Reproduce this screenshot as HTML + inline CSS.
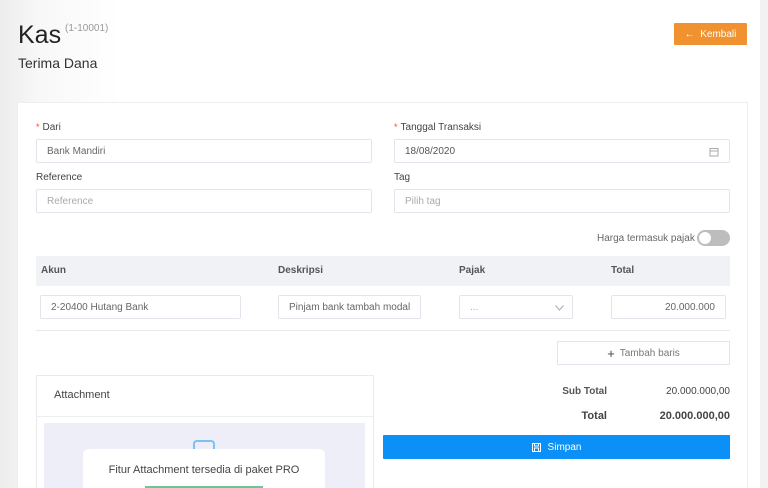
<!DOCTYPE html>
<html style="width:768px;height:488px;overflow:hidden"><head><style>
*{box-sizing:border-box;margin:0;padding:0}
body{width:768px;height:488px;overflow:hidden;font-family:"Liberation Sans",sans-serif;background:linear-gradient(90deg,#ececec 0px,#f8f8f8 40px,#fff 120px);position:relative;color:#444}
.a{position:absolute}
.inp{position:absolute;border:1px solid #e3e5ec;border-radius:2px;background:#fff;font-size:10px;color:#666;padding-left:10px;display:flex;align-items:center}
.lbl{position:absolute;font-size:10px;color:#444}
.req{color:#e74c3c;font-size:9px;margin-right:3px}
.th{position:absolute;top:265px;font-size:10px;color:#555;font-weight:bold}
</style></head><body>
<div class="a" style="left:760px;top:0;width:8px;height:488px;background:#f2f2f2"></div>
<div class="a" style="left:18px;top:21px;font-size:25px;color:#222">Kas</div>
<div class="a" style="left:65px;top:23px;font-size:10px;color:#999">(1-10001)</div>
<div class="a" style="left:18px;top:55px;font-size:14px;color:#333">Terima Dana</div>
<div class="a" style="left:674px;top:23px;width:73px;height:22px;background:#ef922f;color:#fff;font-size:10px;display:flex;align-items:center;justify-content:center;border-radius:1px">&#8592;&nbsp; Kembali</div>
<div class="a" style="left:17px;top:102px;width:731px;height:386px;background:#fff;border:1px solid #eceef1;border-bottom:none"></div>
<div class="lbl" style="left:36px;top:122px"><span class="req">*</span>Dari</div>
<div class="inp" style="left:36px;top:139px;width:336px;height:24px">Bank Mandiri</div>
<div class="lbl" style="left:394px;top:122px"><span class="req">*</span>Tanggal Transaksi</div>
<div class="inp" style="left:394px;top:139px;width:336px;height:24px;color:#555">18/08/2020
<svg class="a" style="right:10px;top:7px" width="10" height="10" viewBox="0 0 10 10"><rect x="1" y="1.5" width="8" height="7.5" fill="none" stroke="#aaa"/><line x1="1" y1="4" x2="9" y2="4" stroke="#aaa"/></svg></div>
<div class="lbl" style="left:36px;top:172px">Reference</div>
<div class="inp" style="left:36px;top:189px;width:336px;height:24px;color:#aaa">Reference</div>
<div class="lbl" style="left:394px;top:172px">Tag</div>
<div class="inp" style="left:394px;top:189px;width:336px;height:24px;color:#aaa">Pilih tag</div>
<div class="a" style="left:597px;top:233px;font-size:10px;color:#666">Harga termasuk pajak</div>
<div class="a" style="left:697px;top:230px;width:33px;height:16px;border-radius:8px;background:#bdbdbd"><div class="a" style="left:2px;top:2px;width:12px;height:12px;border-radius:6px;background:#fff"></div></div>
<div class="a" style="left:36px;top:256px;width:694px;height:30px;background:#f1f2f6"></div>
<div class="th" style="left:41px">Akun</div>
<div class="th" style="left:278px">Deskripsi</div>
<div class="th" style="left:459px">Pajak</div>
<div class="th" style="left:611px">Total</div>
<div class="inp" style="left:40px;top:295px;width:201px;height:24px">2-20400 Hutang Bank</div>
<div class="inp" style="left:278px;top:295px;width:143px;height:24px">Pinjam bank tambah modal</div>
<div class="inp" style="left:459px;top:295px;width:114px;height:24px;color:#aaa">...<svg class="a" style="right:8px;top:9px" width="9" height="6" viewBox="0 0 9 6"><path d="M0.5 0.5L4.5 5L8.5 0.5" fill="none" stroke="#aaa"/></svg></div>
<div class="inp" style="left:611px;top:295px;width:115px;height:24px;justify-content:flex-end;padding-right:10px">20.000.000</div>
<div class="a" style="left:36px;top:330px;width:694px;height:1px;background:#e6e8ee"></div>
<div class="a" style="left:557px;top:341px;width:173px;height:24px;border:1px solid #e3e5ec;font-size:10px;color:#777;display:flex;align-items:center;justify-content:center"><span style="font-size:13px;color:#444;margin-right:5px">+</span>Tambah baris</div>
<div class="a" style="left:520px;top:386px;width:87px;text-align:right;font-size:10px;font-weight:bold;color:#555">Sub Total</div>
<div class="a" style="left:620px;top:386px;width:110px;text-align:right;font-size:10px;color:#444">20.000.000,00</div>
<div class="a" style="left:520px;top:410px;width:87px;text-align:right;font-size:11px;font-weight:bold;color:#444">Total</div>
<div class="a" style="left:620px;top:410px;width:110px;text-align:right;font-size:11px;font-weight:bold;color:#444">20.000.000,00</div>
<div class="a" style="left:383px;top:435px;width:347px;height:24px;background:#0b90f7;color:#fff;font-size:10px;display:flex;align-items:center;justify-content:center;border-radius:1px"><svg width="9" height="9" viewBox="0 0 9 9" style="margin-right:7px"><rect x="0.5" y="0.5" width="8" height="8" fill="none" stroke="#fff"/><rect x="2.5" y="0.5" width="4" height="2.5" fill="none" stroke="#fff"/><rect x="2.5" y="5" width="4" height="3.5" fill="none" stroke="#fff"/></svg>Simpan</div>
<div class="a" style="left:36px;top:375px;width:338px;height:113px;border:1px solid #e8eaee;border-bottom:none;background:#fff"></div>
<div class="a" style="left:54px;top:389px;font-size:11px;color:#444">Attachment</div>
<div class="a" style="left:37px;top:416px;width:336px;height:1px;background:#eceef1"></div>
<div class="a" style="left:44px;top:423px;width:321px;height:65px;background:#eeeef8"></div>
<div class="a" style="left:193px;top:440px;width:22px;height:12px;border:2px solid #7cc0f5;border-bottom:none;border-radius:4px 4px 0 0"></div>
<div class="a" style="left:83px;top:449px;width:242px;height:39px;background:#fff;border-radius:6px 6px 0 0"></div>
<div class="a" style="left:83px;top:464px;width:242px;text-align:center;font-size:11px;color:#444">Fitur Attachment tersedia di paket PRO</div>
<div class="a" style="left:145px;top:486px;width:118px;height:2px;background:#6cc49a"></div>
</body></html>
